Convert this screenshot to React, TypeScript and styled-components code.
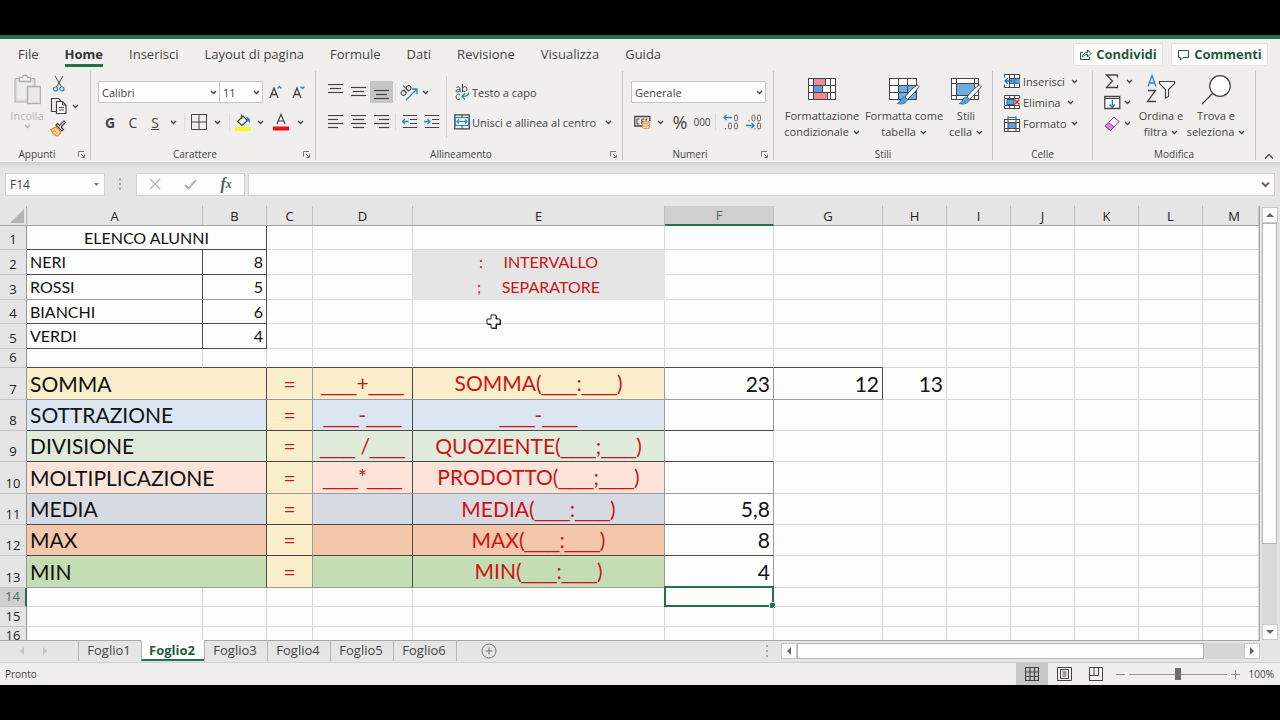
import React from "react";
import styled, { createGlobalStyle, css } from "styled-components";

const UI_FONT = `"Open Sans", "Noto Sans", sans-serif`;
const CELL_FONT = `Lato, "Liberation Sans", sans-serif`;
const GREEN = "#217346";
const INK = "#444";
const BLUE = "#2b88c4";

const GlobalStyle = createGlobalStyle`
  *, *::before, *::after { box-sizing: border-box; }
  html, body { margin: 0; padding: 0; background: #000; }
  button, input, select { font-family: inherit; font-size: inherit; color: inherit; margin: 0; }
`;

/* ---------- shell ---------- */

const Shell = styled.div`
  display: flex;
  flex-direction: column;
  height: 100vh;
  padding: 35px 0;
  background: #000;
  font-family: ${UI_FONT};
  font-size: 12px;
  color: ${INK};
`;

const Window = styled.div`
  flex: 1;
  min-height: 0;
  display: flex;
  flex-direction: column;
  overflow: hidden;
  border-top: 4px solid ${GREEN};
  background: #f0efee;
`;

const PlainButton = styled.button`
  display: flex;
  align-items: center;
  justify-content: center;
  padding: 0;
  border: 0;
  background: transparent;
  white-space: nowrap;
`;

/* ---------- tab strip ---------- */

const TabStrip = styled.nav`
  display: flex;
  align-items: center;
  height: 30px;
  flex: none;
  padding: 0 12px 0 18px;
`;

const TabList = styled.div`
  display: flex;
  gap: 26px;
  flex: 1;
`;

const RibbonTab = styled(PlainButton)<{ $active?: boolean }>`
  height: 26px;
  font-size: 13px;
  border-top: 3px solid transparent;
  border-bottom: 3px solid ${(p) => (p.$active ? GREEN : "transparent")};
  font-weight: ${(p) => (p.$active ? 700 : 400)};
  color: ${(p) => (p.$active ? "#333" : INK)};
`;

const ShareButton = styled(PlainButton)<{ $width: number }>`
  width: ${(p) => p.$width}px;
  height: 23px;
  margin-left: 8px;
  gap: 4px;
  background: #fdfdfd;
  border: 1px solid #e3e2e1;
  border-radius: 2px;
  font-size: 13px;
  font-weight: 700;
  color: #1d5c3c;
`;

/* ---------- ribbon ---------- */

const Ribbon = styled.div`
  display: flex;
  flex: none;
  height: 93px;
  padding: 2px 0;
  font-size: 11px;
`;

const Group = styled.section<{ $width: number }>`
  display: flex;
  flex-direction: column;
  flex: none;
  width: ${(p) => p.$width}px;
  border-right: 1px solid #c4c3c2;
`;

const GroupBody = styled.div<{ $left: number }>`
  display: flex;
  flex: 1;
  align-items: flex-start;
  padding-left: ${(p) => p.$left}px;
`;

const GroupFooter = styled.div`
  display: flex;
  align-items: center;
  height: 12px;
  font-size: 10px;
  line-height: 12px;
  svg { margin: 0 5px 0 4px; }
`;

const GroupName = styled.span`
  flex: 1;
  text-align: center;
`;

const Rows = styled.div`
  display: flex;
  flex-direction: column;
  gap: 8px;
  padding-top: 10px;
`;

const TightRows = styled.div<{ $top?: number }>`
  display: flex;
  flex-direction: column;
  padding-top: ${(p) => p.$top || 0}px;
`;

const Row = styled.div`
  display: flex;
  align-items: center;
  height: 22px;
`;

const TightRow = styled(Row)`
  height: 21px;
`;

const Tool = styled(PlainButton)<{ $width?: number; $on?: boolean }>`
  width: ${(p) => (p.$width ? `${p.$width}px` : "auto")};
  height: 22px;
  flex: none;
  background: ${(p) => (p.$on ? "#c6c6c6" : "transparent")};
`;

const LabelTool = styled(PlainButton)`
  height: 22px;
  gap: 2px;
  padding-left: 3px;
`;

const Divider = styled.span<{ $gap: number }>`
  width: 1px;
  height: 18px;
  margin: 0 ${(p) => p.$gap}px;
  background: #dcdbda;
`;

const TallDivider = styled.span`
  width: 1px;
  height: 62px;
  margin: 5px 4px 0 3px;
  background: #d4d3d2;
`;

const BigTool = styled(PlainButton)<{ $width: number; $muted?: boolean }>`
  flex-direction: column;
  justify-content: flex-start;
  width: ${(p) => p.$width}px;
  padding-top: 3px;
  line-height: 16px;
  color: ${(p) => (p.$muted ? "#b3b2b1" : INK)};
  svg { flex: none; }
`;

const BigToolText = styled.span`
  display: block;
  padding-top: 3px;
  svg {
    margin-left: 1px;
    vertical-align: 1px;
  }
`;

const LetterTool = styled(Tool)`
  font-size: 14px;
`;

const PercentTool = styled(Tool)`
  font-size: 18px;
`;

const ThousandsTool = styled(Tool)`
  font-size: 10px;
`;

const SelectBox = styled.label<{ $width: number }>`
  position: relative;
  display: block;
  width: ${(p) => p.$width}px;
  height: 22px;
  & + & { margin-left: -1px; }
  svg {
    position: absolute;
    right: 3px;
    top: 9px;
    pointer-events: none;
  }
`;

const Select = styled.select`
  appearance: none;
  width: 100%;
  height: 22px;
  padding: 0 3px;
  border: 1px solid #c8c7c6;
  border-radius: 0;
  background: #fefefe;
`;

const RibbonEnd = styled.div`
  flex: 1;
  display: flex;
  align-items: flex-end;
  justify-content: flex-end;
  padding-right: 6px;
`;

/* ---------- formula bar ---------- */

const FormulaBar = styled.div`
  display: flex;
  align-items: center;
  flex: none;
  height: 44px;
  padding: 0 5px;
  background: linear-gradient(#d0cfce, #e5e5e5 6px);
`;

const NameBox = styled.div`
  display: flex;
  align-items: center;
  width: 100px;
  height: 23px;
  padding-right: 5px;
  border: 1px solid #d2d2d2;
  background: #fdfdfd;
`;

const BareInput = styled.input`
  flex: 1;
  min-width: 0;
  height: 21px;
  padding: 0 4px;
  border: 0;
  outline: 0;
  background: transparent;
`;

const GripSlot = styled.span`
  display: flex;
  justify-content: center;
  width: 31px;
`;

const FormulaTools = styled.div`
  display: flex;
  width: 109px;
  height: 23px;
  border: 1px solid #d2d2d2;
  background: #fdfdfd;
  button { flex: 1; }
`;

const FxButton = styled(PlainButton)`
  font-family: "Liberation Serif", serif;
  font-style: italic;
  font-weight: 700;
  font-size: 16px;
  color: #5c5c5c;
  sub {
    font-size: 12px;
    line-height: 12px;
    vertical-align: -2px;
  }
`;

const FormulaField = styled.div`
  flex: 1;
  display: flex;
  align-items: center;
  height: 23px;
  margin-left: 3px;
  padding-right: 4px;
  border: 1px solid #d2d2d2;
  background: #fdfbfc;
`;

/* ---------- grid ---------- */

const SheetArea = styled.div`
  flex: 1;
  min-height: 0;
  display: flex;
  background: #e5e5e5;
`;

const GridClip = styled.div`
  flex: 1;
  min-width: 0;
  overflow: hidden;
  border-right: 1px solid #a6a6a6;
  background: #fdfdfd;
`;

const Grid = styled.table`
  width: 100%;
  min-width: 1240px;
  table-layout: fixed;
  border-collapse: separate;
  border-spacing: 0;
  font-size: 13px;
`;

const ColumnHead = styled.th<{ $selected?: boolean }>`
  height: 20px;
  padding: 0;
  line-height: 18px;
  font-weight: 400;
  color: ${(p) => (p.$selected ? "#43705a" : "#222")};
  background: ${(p) => (p.$selected ? "#cfcfcf" : "#e5e5e5")};
  border-right: 1px solid #c0c0c0;
  border-bottom: ${(p) => (p.$selected ? `2px solid ${GREEN}` : "1px solid #a6a6a6")};
  &:last-child { padding-left: 7px; }
`;

const Corner = styled.td`
  padding: 3px 2px 2px 10px;
  line-height: 0;
  background: #e5e5e5;
  border-right: 1px solid #b4b4b4;
  border-bottom: 1px solid #a6a6a6;
`;

const RowHead = styled.th<{ $selected?: boolean }>`
  padding: 0 0 1px;
  vertical-align: bottom;
  line-height: 17px;
  font-weight: 400;
  color: ${(p) => (p.$selected ? "#43705a" : "#222")};
  background: ${(p) => (p.$selected ? "#cfcfcf" : "#e5e5e5")};
  border-right: ${(p) => (p.$selected ? `2px solid ${GREEN}` : "1px solid #8f9791")};
  border-bottom: 1px solid #c4c4c4;
`;

type Edge = "dark" | "mid" | "none" | undefined;
const edgeColor = (edge: Edge, fill?: string) =>
  edge === "dark" ? "#4a4a4a" : edge === "mid" ? "#9a9a9a" : edge === "none" ? fill || "#fdfdfd" : "#d9d9d9";

const Cell = styled.td<{
  $fill?: string;
  $right?: Edge;
  $bottom?: Edge;
  $align?: string;
  $red?: boolean;
  $large?: boolean;
}>`
  position: relative;
  padding: 0 3px;
  white-space: pre;
  font-family: ${CELL_FONT};
  line-height: 18px;
  color: ${(p) => (p.$red ? "#cc1414" : "#111")};
  text-align: ${(p) => p.$align || "left"};
  font-size: ${(p) => (p.$large ? 21 : 16)}px;
  background: ${(p) => p.$fill || "transparent"};
  border-right: 1px solid ${(p) => edgeColor(p.$right, p.$fill)};
  border-bottom: 1px solid ${(p) => edgeColor(p.$bottom, p.$fill)};
`;

const Underline = styled.span`
  font-family: "Liberation Sans", sans-serif;
`;

const Selection = styled.span`
  position: absolute;
  inset: -2px -1px -1px -1px;
  border: 2px solid ${GREEN};
  &::after {
    content: "";
    position: absolute;
    right: -3px;
    bottom: -3px;
    width: 5px;
    height: 5px;
    background: ${GREEN};
    box-shadow: 0 0 0 1px #fff;
  }
`;

const Pointer = styled.svg`
  position: absolute;
  left: 73px;
  top: 14px;
  z-index: 1;
`;

/* ---------- scroll bars ---------- */

const VScroll = styled.div`
  display: flex;
  flex-direction: column;
  flex: none;
  width: 20px;
  padding: 1px 3px 0 2px;
  background: #e5e5e5;
`;

const VTrack = styled.div`
  flex: 1;
  background: #d9d9d9;
`;

const VThumb = styled.div`
  height: 80%;
  border: 1px solid #b5b5b5;
  background: #fdfdfd;
`;

const Arrow = styled(PlainButton)`
  width: 16px;
  height: 16px;
  flex: none;
  border: 1px solid #c8c8c8;
  background: #fdfdfd;
`;

const HScroll = styled.div`
  display: flex;
  align-items: center;
  flex: none;
  width: 38%;
  height: 21px;
  border-top: 1px solid #a6a6a6;
`;

const HTrack = styled.div`
  flex: 1;
  height: 16px;
  background: #d6d6d6;
`;

const HThumb = styled.div`
  width: 91%;
  height: 16px;
  border: 1px solid #b5b5b5;
  background: #fdfdfd;
`;

/* ---------- sheet tabs and status ---------- */

const SheetBar = styled.div`
  display: flex;
  align-items: flex-start;
  flex: none;
  height: 23px;
  padding-right: 20px;
  border-bottom: 1px solid #cfcfcf;
  background: #e5e5e5;
`;

const SheetNav = styled.div`
  display: flex;
  width: 78px;
  height: 21px;
  padding-left: 10px;
  border-top: 1px solid #a6a6a6;
  button { width: 23px; }
`;

const SheetTab = styled(PlainButton)<{ $active?: boolean }>`
  width: 63px;
  height: 21px;
  padding: 0 2px 2px 0;
  font-size: 13px;
  line-height: 17px;
  border-top: 1px solid #a6a6a6;
  border-left: 1px solid #b5b5b5;
  ${(p) =>
    p.$active &&
    css`
      padding-bottom: 0;
      font-weight: 700;
      color: #1d5c3c;
      background: #fff;
      border-top-color: #fff;
      border-bottom: 2px solid ${GREEN};
    `}
`;

const SheetFill = styled.div`
  flex: 1;
  display: flex;
  align-items: center;
  justify-content: space-between;
  height: 21px;
  padding: 0 12px 0 24px;
  border-top: 1px solid #a6a6a6;
  border-left: 1px solid #b5b5b5;
`;

const StatusBar = styled.footer`
  display: flex;
  align-items: center;
  flex: none;
  height: 22px;
  padding: 0 6px 0 5px;
  font-size: 10px;
`;

const StatusText = styled.span`
  flex: 1;
  padding-bottom: 1px;
`;

const ViewButton = styled(PlainButton)<{ $on?: boolean }>`
  width: 32px;
  height: 22px;
  background: ${(p) => (p.$on ? "#c6c6c6" : "transparent")};
`;

const ZoomControls = styled.div`
  display: flex;
  align-items: center;
  margin-left: 4px;
`;

const ZoomSlider = styled.input`
  appearance: none;
  width: 98px;
  height: 12px;
  margin: 0 4px;
  background: linear-gradient(#9a9a9a, #9a9a9a) center / 100% 1px no-repeat;
  &::-webkit-slider-thumb {
    appearance: none;
    width: 6px;
    height: 12px;
    background: #6d6d6d;
  }
`;

const ZoomValue = styled.span`
  width: 34px;
  padding-bottom: 1px;
  text-align: right;
`;

/* ---------- icons ---------- */

type IconProps = { w: number; h: number; children: React.ReactNode; stroke?: string; top?: number };
const Icon = ({ w, h, children, stroke = INK, top = 0 }: IconProps) => (
  <svg width={w} height={h} viewBox={`0 ${-top} ${w} ${h}`} fill="none" stroke={stroke} strokeWidth="1" aria-hidden="true">
    {children}
  </svg>
);

const Chevron = ({ color = INK }: { color?: string }) => (
  <Icon w={7} h={5} stroke={color}>
    <path d="M1 1l2.500 2.500L6 1" strokeWidth="1.300" />
  </Icon>
);

const Launcher = () => (
  <Icon w={7} h={7} stroke="#777">
    <path d="M.5 5.500V.5H6M3 3l3 3M6.500 3.500v3h-3" />
  </Icon>
);

const PasteIcon = () => (
  <Icon w={28} h={31}>
    <g stroke="#b0afae">
      <path d="M2 4.500h20v23.500H2z" fill="#dddcdb" />
      <path d="M4.500 7.500h15v18h-15z" fill="#ececeb" stroke="none" />
      <path d="M6.500 7.500v-4h3c0-3 5-3 5 0h3v4z" fill="#f0efee" strokeWidth="1.300" />
      <path d="M14.500 12.500h13v17h-13z" fill="#e9e9e9" strokeWidth="1.500" />
    </g>
  </Icon>
);

const CutIcon = () => (
  <Icon w={12} h={16}>
    <path d="M2 0l6.500 11M10 0L3.500 11" />
    <circle cx="2.500" cy="13" r="2" stroke={BLUE} strokeWidth="1.200" />
    <circle cx="9" cy="13" r="2" stroke={BLUE} strokeWidth="1.200" />
  </Icon>
);

const CopyIcon = () => (
  <Icon w={17} h={16}>
    <path d="M6 13.500H1.500V.5h7L11 3" strokeWidth="1.200" />
    <path d="M6.500 3.500h6l3.500 3.500v8.500H6.500z" fill="#fdfdfd" strokeWidth="1.200" />
    <path d="M12.500 3.500V7H16M9 9.500h5M9 12h5" />
  </Icon>
);

const PainterIcon = () => (
  <Icon w={17} h={17}>
    <path d="M.8 9.500L6 7l5 5-3 4c-3 .3-5.500-3-7.200-6.500z" fill="#f9d3a6" stroke="#e08a2c" strokeWidth="1.200" />
    <path d="M3 11l3 .5M5.500 14l2-1.500" stroke="#e08a2c" />
    <path d="M6 5l6 6 1.500-1.500L11 7l4.500-4.500L14 1 9.500 5.500 7.500 3.500z" fill="#fdfdfd" strokeWidth="1.200" />
  </Icon>
);

const FontSizeIcon = ({ down }: { down?: boolean }) => (
  <Icon w={14} h={14}>
    <path d="M1 13L5 3l4 10M2.500 9.500h5" strokeWidth="1.300" />
    <path d={down ? "M8.500 1.500l2 2 2-2" : "M8.500 3.500l2-2 2 2"} stroke={BLUE} strokeWidth="1.300" />
  </Icon>
);

const BordersIcon = () => (
  <Icon w={16} h={16}>
    <path d="M.5.5h15v15H.5zM8 .5v15M.5 8h15" />
  </Icon>
);

const FillIcon = () => (
  <Icon w={17} h={17}>
    <path d="M2.500 7.500L8 2l4.500 4.500L7 11.500zM6.500.5v4.500" strokeWidth="1.200" />
    <path d="M11.500 3.500c3 0 3.500 2.500 3 5-1.500-1.500-1.500-3-3-5z" fill={BLUE} stroke={BLUE} />
    <path d="M0 13h16v4H0z" fill="#f8f820" stroke="none" />
  </Icon>
);

const FontColorIcon = () => (
  <Icon w={16} h={18}>
    <path d="M4 11L8 1.300l4 9.700M5.200 8h5.600" strokeWidth="1.200" />
    <path d="M0 13.500h16v4H0z" fill="#ee1111" stroke="none" />
  </Icon>
);

const LinesIcon = ({ lines, h = 14 }: { lines: [number, number, number][]; h?: number }) => (
  <Icon w={15} h={h}>
    {lines.map(([x1, x2, y]) => (
      <path key={y} d={`M${x1} ${y}H${x2}`} strokeWidth="1.200" />
    ))}
  </Icon>
);

const IndentIcon = ({ right }: { right?: boolean }) => (
  <Icon w={15} h={14}>
    <path d="M1 .5h14M8 4.500h7M8 8.500h7M1 12.500h14" strokeWidth="1.200" />
    <path d={right ? "M0 6.500h6M3.500 4L6 6.500 3.500 9" : "M6.500 6.500h-6M3 4L.5 6.500 3 9"} stroke={BLUE} strokeWidth="1.300" />
  </Icon>
);

const OrientationIcon = () => (
  <Icon w={18} h={17}>
    <g transform="rotate(-45 6 8)">
      <circle cx="3.500" cy="7" r="2.300" />
      <path d="M5.800 4.500V9.500M8.500 1.500v8" />
      <circle cx="10.800" cy="7" r="2.300" />
    </g>
    <path d="M6 16L16.500 5.500M12 5h5v5" stroke={BLUE} strokeWidth="1.300" />
  </Icon>
);

const WrapIcon = () => (
  <Icon w={16} h={16}>
    <path d="M2.500 3.500c2-1.200 3.500-.5 3.500 1V8M6 5.500c-2-.3-4 .2-4 1.500s3 1.500 4-.5" />
    <path d="M8.500 0v8M8.500 5c0-3 4.500-3 4.500 0s-4.500 3-4.500 1" />
    <path d="M6 11c-1.500-1.200-4-.5-4 2s2.500 3 4 1.800" />
    <path d="M14.500 8.500c0 3-2 4-6 4M11 9.500l-3 3 3 3" stroke={BLUE} strokeWidth="1.300" />
  </Icon>
);

const MergeIcon = () => (
  <Icon w={16} h={16}>
    <path d="M.8.8h14.400v14H.8z" strokeWidth="1.300" />
    <path d="M1.300 3.500h13.400v8H1.300z" fill="#e4f2fb" stroke={BLUE} strokeWidth="1.200" />
    <path d="M8 .5v3M8 11.500v3" />
    <path d="M3 7.500h10M5 5.500l-2 2 2 2M11 5.500l2 2-2 2" stroke={BLUE} strokeWidth="1.200" />
  </Icon>
);

const CurrencyIcon = () => (
  <Icon w={17} h={15}>
    <path d="M8 11H.8V1.500h15V6" strokeWidth="1.300" />
    <path d="M5.500 4H3v5h2.500M10.500 4H7.800v5H8M7.800 6.500h2M13.500 4H12v2" />
    <path d="M8.500 7.500c0-1.500 7-1.500 7 0v5c0 1.500-7 1.500-7 0z" fill="#fbe3c4" stroke="#e8912d" />
    <path d="M8.500 7.500c0 1.500 7 1.500 7 0M8.500 10c0 1.500 7 1.500 7 0" stroke="#e8912d" />
  </Icon>
);

const Zero = ({ x, y }: { x: number; y: number }) => <rect x={x} y={y} width="3" height="6" rx="1.500" />;

const DecimalIcon = ({ fewer }: { fewer?: boolean }) => (
  <Icon w={16} h={16} stroke="#666">
    {fewer ? (
      <>
        <Zero x={6} y={1} />
        <Zero x={11.5} y={1} />
        <Zero x={11.5} y={9} />
        <path d="M3 6v1.500M9 14v1.500" />
        <path d="M0 11.500h8M5.500 9L8 11.500 5.500 14" stroke={BLUE} strokeWidth="1.300" />
      </>
    ) : (
      <>
        <Zero x={11.5} y={1} />
        <Zero x={5.5} y={9} />
        <Zero x={11.5} y={9} />
        <path d="M2.500 14v1.500" />
        <path d="M9 3.500H1M3.500 1L1 3.500 3.500 6" stroke={BLUE} strokeWidth="1.300" />
      </>
    )}
  </Icon>
);

const ConditionalIcon = () => (
  <Icon w={30} h={31} top={2}>
    <path d="M1.500 2.500h27v21h-27z" fill="#fdfdfd" />
    <path d="M6.500 2.500h12v7h-12zM6.500 16.500h14v7h-14z" fill="#f28b90" stroke="none" />
    <path d="M6.500 10h9v6h-9z" fill="#5b9fdb" stroke="none" />
    <path d="M1.500 2.500h27v21h-27zM1.500 9.500h27M1.500 16.500h27M6.500 2.500v21M18.500 2.500v7M15.500 9.500v7M20.500 16.500v7M23.500 2.500v21" />
  </Icon>
);

const BrushShape = () => (
  <>
    <path d="M29.500 9c-3 1-9.500 8-12.500 12l2.500 2.500C23 20 30 13 31 10.500z" fill="#fdfdfd" />
    <path d="M9 27.500c3-.5 3.500-3.500 5-5.500 1.500-1.500 4.500-1 5 1.500.5 3-4 5.500-10 4z" fill="#5b9fdb" stroke="#3479b8" />
  </>
);

const TableFormatIcon = () => (
  <Icon w={32} h={31} top={2}>
    <path d="M1.500 2.500h27v21h-27z" fill="#fdfdfd" />
    <path d="M10.500 9.500h18v14h-18z" fill="#6cade4" stroke="none" />
    <path d="M1.500 2.500h27v21h-27zM1.500 9.500h27M1.500 16.500h27M10.500 2.500v21M19.500 2.500v21" />
    <BrushShape />
  </Icon>
);

const CellStyleIcon = () => (
  <Icon w={32} h={31} top={2}>
    <path d="M1.500 2.500h27v21h-27z" fill="#fdfdfd" />
    <path d="M6.500 7.500h18v12h-18z" fill="#6cade4" stroke="none" />
    <path d="M1.500 2.500h27v21h-27zM1.500 7.500h27M1.500 19.500h27M6.500 2.500v21M24.500 2.500v21" />
    <BrushShape />
  </Icon>
);

const InsertCellsIcon = () => (
  <Icon w={17} h={15}>
    <path d="M.5.5h15v13H.5z" fill="#fdfdfd" />
    <path d="M.5 4.500h15M.5 9.500h15M5.500.5v13M10.500.5v13" />
    <path d="M6 5h10v4.500H6z" fill="#5b9fdb" stroke="none" />
    <path d="M0 3.500h5v7H0z" fill="#f0efee" stroke="none" />
    <path d="M10.500 4.500v5M8 7H1M4 4L1 7l3 3" stroke="#1f77bd" strokeWidth="1.300" />
  </Icon>
);

const DeleteCellsIcon = () => (
  <Icon w={17} h={15}>
    <path d="M.5.5h15v3H.5zM.5 10.500h15v3H.5zM5.500.5v3M10.500.5v3M5.500 10.500v3M10.500 10.500v3" fill="#fdfdfd" />
    <path d="M.5 3.500v7M3 4.500h7v5H3z" fill="#5b9fdb" stroke="#1f5f9e" />
    <path d="M10.500 4.500l5 5M15.500 4.500l-5 5" stroke="#e02b2b" strokeWidth="1.500" />
  </Icon>
);

const FormatCellsIcon = () => (
  <Icon w={17} h={16}>
    <path d="M.5 3.500h15v12H.5z" fill="#fdfdfd" />
    <path d="M4 6.500h8v6H4z" fill="#5b9fdb" stroke="none" />
    <path d="M.5 3.500h15v12H.5zM.5 6.500h15M.5 12.500h15M4 3.500v12M12 3.500v12" />
    <path d="M4 1.500h8M4 0v3M12 0v3" stroke="#1f77bd" />
  </Icon>
);

const SumIcon = () => (
  <Icon w={14} h={15}>
    <path d="M12.500 3.500V1H1.500l6 6-6 6.500h11V11" strokeWidth="1.300" />
  </Icon>
);

const FillDownIcon = () => (
  <Icon w={17} h={15}>
    <path d="M.8 1.500h15v12H.8z" fill="#fdfdfd" strokeWidth="1.300" />
    <path d="M1 3.500h15" />
    <path d="M8.300 5v7M5.500 9.500l2.800 2.800 2.800-2.800" stroke="#1f77bd" strokeWidth="1.300" />
  </Icon>
);

const EraserIcon = () => (
  <Icon w={17} h={16} stroke="#96399e">
    <path d="M1 10L10 1l5 4.500L6.500 14.500z" fill="#fdfdfd" />
    <path d="M1 10l3.500-3.500L10 11l-3.500 3.500z" fill="#d58bdc" />
  </Icon>
);

const SortIcon = () => (
  <Icon w={30} h={31}>
    <path d="M2 12.500L6 1.500l4 11M3.500 9h5" stroke={BLUE} strokeWidth="1.300" />
    <path d="M2 16.500h7.500l-8 11h8.500" strokeWidth="1.300" />
    <path d="M13.500 7.500h15v2l-6 6v7l-3 1.500v-8.500l-6-6z" fill="#fdfdfd" strokeWidth="1.200" />
  </Icon>
);

const FindIcon = () => (
  <Icon w={30} h={31} top={1}>
    <circle cx="19" cy="11" r="10.300" fill="#fdfdfd" strokeWidth="1.200" />
    <path d="M11.500 18.500L1 29" strokeWidth="1.300" />
  </Icon>
);

const ShareIcon = () => (
  <Icon w={13} h={13} stroke="#1d5c3c">
    <path d="M4 4.500H1.500v7h9V9M3.500 9c.5-3 2-4.500 5-4.500V2L12 5.500 8.500 9V6.500C6 6.500 5 7 3.500 9z" />
  </Icon>
);

const CommentIcon = () => (
  <Icon w={13} h={13} stroke="#1d5c3c">
    <path d="M1.500 2.500h10v7H6l-2.500 2.500V9.500h-2z" />
  </Icon>
);

const Triangle = ({ d, color = "#666" }: { d: string; color?: string }) => (
  <Icon w={8} h={8} stroke="none">
    <path d={d} fill={color} />
  </Icon>
);
const UP = "M0 6l4-4 4 4z";
const DOWN = "M0 2l4 4 4-4z";
const LEFT = "M6 0v8L2 4z";
const RIGHT = "M2 0v8l4-4z";

const Grip = () => (
  <Icon w={3} h={12} stroke="none">
    <path d="M0 0h2v2H0zM0 5h2v2H0zM0 10h2v2H0z" fill="#a8a8a8" />
  </Icon>
);

/* ---------- data ---------- */

const TABS = ["File", "Home", "Inserisci", "Layout di pagina", "Formule", "Dati", "Revisione", "Visualizza", "Guida"];
const SHEETS = ["Foglio1", "Foglio2", "Foglio3", "Foglio4", "Foglio5", "Foglio6"];

const COLUMNS: [string, number | undefined][] = [
  ["A", 176], ["B", 64], ["C", 46], ["D", 100], ["E", 252], ["F", 109], ["G", 109],
  ["H", 64], ["I", 64], ["J", 64], ["K", 64], ["L", 64], ["M", undefined],
];

const YELLOW = "#fbeecb";
const OPERATIONS = [
  { row: 7, h: 32, name: "SOMMA", fill: YELLOW, sign: "___+___", formula: "SOMMA(___:___)", result: "23" },
  { row: 8, h: 31, name: "SOTTRAZIONE", fill: "#dbe6f2", sign: "___-___", formula: "___-___", result: "" },
  { row: 9, h: 31, name: "DIVISIONE", fill: "#e0ebdb", sign: "___ /___", formula: "QUOZIENTE(___;___)", result: "" },
  { row: 10, h: 32, name: "MOLTIPLICAZIONE", fill: "#fce3d9", sign: "___*___", formula: "PRODOTTO(___;___)", result: "" },
  { row: 11, h: 31, name: "MEDIA", fill: "#d6dae3", sign: "", formula: "MEDIA(___:___)", result: "5,8" },
  { row: 12, h: 31, name: "MAX", fill: "#f4c7aa", sign: "", formula: "MAX(___:___)", result: "8" },
  { row: 13, h: 32, name: "MIN", fill: "#c5ddb3", sign: "", formula: "MIN(___:___)", result: "4" },
];

const PUPILS = [
  { row: 2, h: 25, name: "NERI", mark: "8", note: ":     INTERVALLO" },
  { row: 3, h: 25, name: "ROSSI", mark: "5", note: ";     SEPARATORE" },
  { row: 4, h: 24, name: "BIANCHI", mark: "6", note: "" },
  { row: 5, h: 25, name: "VERDI", mark: "4", note: "" },
];

const Blanks = ({ count }: { count: number }) => (
  <>
    {Array.from({ length: count }, (_, i) => (
      <Cell key={i} />
    ))}
  </>
);

/* Runs of underscores are set in a face whose underscores join into one line. */
const Formula = ({ text }: { text: string }) => (
  <>
    {text.split(/(_+)/).map((part, i) => (part.startsWith("_") ? <Underline key={i}>{part}</Underline> : part))}
  </>
);

const CellPointer = () => (
  <Pointer width="17" height="17" viewBox="0 0 17 17" aria-hidden="true">
    <path d="M6 2h5v4h4v5h-4v4H6v-4H2V6h4z" fill="#222" />
    <path d="M5 1h5v4h4v5h-4v4H5v-4H1V5h4z" fill="#fff" stroke="#222" />
  </Pointer>
);

const SheetGrid = () => (
  <Grid>
    <colgroup>
      <col width={27} />
      {COLUMNS.map(([name, width]) => (
        <col key={name} width={width} />
      ))}
    </colgroup>
    <thead>
      <tr>
        <Corner>
          <Icon w={14} h={14} stroke="none">
            <path d="M14 0v14H0z" fill="#b4b4b4" />
          </Icon>
        </Corner>
        {COLUMNS.map(([name]) => (
          <ColumnHead key={name} scope="col" $selected={name === "F"}>{name}</ColumnHead>
        ))}
      </tr>
    </thead>
    <tbody>
      <tr style={{ height: 24 }}>
        <RowHead scope="row">1</RowHead>
        <Cell colSpan={2} $align="center" $right="dark" $bottom="dark">ELENCO ALUNNI</Cell>
        <Blanks count={11} />
      </tr>
      {PUPILS.map((p) => (
        <tr key={p.row} style={{ height: p.h }}>
          <RowHead scope="row">{p.row}</RowHead>
          <Cell $right="dark" $bottom={p.row === 3 ? "mid" : "dark"}>{p.name}</Cell>
          <Cell $right="dark" $bottom={p.row === 3 ? "mid" : "dark"} $align="right">{p.mark}</Cell>
          <Blanks count={2} />
          {p.note ? (
            <Cell $fill="#e5e5e5" $right="none" $bottom="none" $align="center" $red>{p.note}</Cell>
          ) : (
            <Cell>{p.row === 4 && <CellPointer />}</Cell>
          )}
          <Blanks count={8} />
        </tr>
      ))}
      <tr style={{ height: 19 }}>
        <RowHead scope="row">6</RowHead>
        {COLUMNS.map(([name]) => (
          <Cell key={name} $bottom={name < "H" ? "dark" : undefined} />
        ))}
      </tr>
      {OPERATIONS.map((op) => {
        const line: Edge = op.row === 7 || op.row === 10 || op.row === 13 ? "mid" : "dark";
        return (
          <tr key={op.row} style={{ height: op.h }}>
            <RowHead scope="row">{op.row}</RowHead>
            <Cell colSpan={2} $large $fill={op.fill} $right="dark" $bottom={line}>{op.name}</Cell>
            <Cell $large $fill={YELLOW} $right="mid" $bottom={line} $align="center" $red>=</Cell>
            <Cell $large $fill={op.fill} $right="dark" $bottom={line} $align="center" $red><Formula text={op.sign} /></Cell>
            <Cell $large $fill={op.fill} $right="mid" $bottom={line} $align="center" $red><Formula text={op.formula} /></Cell>
            <Cell $large $right={op.row === 9 ? undefined : "mid"} $bottom={op.row === 8 || op.row === 9 ? "dark" : line} $align="right">{op.result}</Cell>
            <Cell $large $right={op.row === 7 ? "dark" : undefined} $bottom={op.row === 7 ? "mid" : undefined} $align="right">
              {op.row === 7 ? "12" : ""}
            </Cell>
            <Cell $large $align="right">{op.row === 7 ? "13" : ""}</Cell>
            <Blanks count={5} />
          </tr>
        );
      })}
      {[14, 15, 16].map((row) => (
        <tr key={row} style={{ height: row === 15 ? 20 : 19 }}>
          <RowHead scope="row" $selected={row === 14}>{row}</RowHead>
          <Blanks count={5} />
          <Cell>{row === 14 && <Selection />}</Cell>
          <Blanks count={7} />
        </tr>
      ))}
    </tbody>
  </Grid>
);

/* ---------- ribbon groups ---------- */

const Footer = ({ name, launcher = true }: { name: string; launcher?: boolean }) => (
  <GroupFooter>
    <GroupName>{name}</GroupName>
    {launcher && <Launcher />}
  </GroupFooter>
);

const Drop = ({ width, label }: { width: number; label: string }) => (
  <Tool $width={width} aria-label={label}><Chevron /></Tool>
);

const ClipboardGroup = () => (
  <Group $width={91} aria-label="Appunti">
    <GroupBody $left={4}>
      <BigTool $width={46} $muted>
        <PasteIcon />
        <BigToolText>Incolla</BigToolText>
        <Chevron color="#b3b2b1" />
      </BigTool>
      <TightRows $top={2}>
        <Row><Tool $width={17} aria-label="Taglia"><CutIcon /></Tool></Row>
        <Row>
          <Tool $width={17} aria-label="Copia"><CopyIcon /></Tool>
          <Drop width={16} label="Opzioni copia" />
        </Row>
        <Row><Tool $width={17} aria-label="Copia formato"><PainterIcon /></Tool></Row>
      </TightRows>
    </GroupBody>
    <Footer name="Appunti" />
  </Group>
);

const FontGroup = () => (
  <Group $width={225} aria-label="Carattere">
    <GroupBody $left={7}>
      <Rows>
        <Row>
          <SelectBox $width={122}>
            <Select aria-label="Tipo di carattere"><option>Calibri</option></Select>
            <Chevron />
          </SelectBox>
          <SelectBox $width={44}>
            <Select aria-label="Dimensione carattere"><option>11</option></Select>
            <Chevron />
          </SelectBox>
          <Tool $width={26} aria-label="Aumenta dimensione"><FontSizeIcon /></Tool>
          <Tool $width={20} aria-label="Riduci dimensione"><FontSizeIcon down /></Tool>
        </Row>
        <Row>
          <LetterTool $width={24}><b>G</b></LetterTool>
          <LetterTool $width={22}>C</LetterTool>
          <LetterTool $width={22}><u>S</u></LetterTool>
          <Drop width={14} label="Opzioni sottolineato" />
          <Divider $gap={4} />
          <Tool $width={20} aria-label="Bordi"><BordersIcon /></Tool>
          <Drop width={16} label="Opzioni bordi" />
          <Divider $gap={4} />
          <Tool $width={18} aria-label="Colore riempimento"><FillIcon /></Tool>
          <Drop width={16} label="Opzioni riempimento" />
          <Tool $width={26} aria-label="Colore carattere"><FontColorIcon /></Tool>
          <Drop width={12} label="Opzioni colore" />
        </Row>
      </Rows>
    </GroupBody>
    <Footer name="Carattere" />
  </Group>
);

const AlignGroup = () => (
  <Group $width={307} aria-label="Allineamento">
    <GroupBody $left={8}>
      <Rows>
        <Row>
          <Tool $width={23} aria-label="Allinea in alto"><LinesIcon lines={[[0, 15, 0.5], [2, 13, 4.5], [0, 15, 8.5]]} h={16} /></Tool>
          <Tool $width={23} aria-label="Allinea al centro"><LinesIcon lines={[[0, 15, 2.5], [2, 13, 6.5], [0, 15, 10.5]]} /></Tool>
          <Tool $width={23} $on aria-label="Allinea in basso"><LinesIcon lines={[[0, 15, 6.5], [2, 13, 10.5], [0, 15, 14.5]]} h={16} /></Tool>
          <Divider $gap={2} />
          <Tool $width={22} aria-label="Orientamento"><OrientationIcon /></Tool>
          <Drop width={10} label="Opzioni orientamento" />
        </Row>
        <Row>
          <Tool $width={23} aria-label="Allinea a sinistra"><LinesIcon lines={[[0, 15, 0.5], [0, 10, 4.5], [0, 15, 8.5], [0, 10, 12.5]]} /></Tool>
          <Tool $width={23} aria-label="Centra"><LinesIcon lines={[[0, 15, 0.5], [2, 13, 4.5], [0, 15, 8.5], [2, 13, 12.5]]} /></Tool>
          <Tool $width={23} aria-label="Allinea a destra"><LinesIcon lines={[[0, 15, 0.5], [5, 15, 4.5], [0, 15, 8.5], [5, 15, 12.5]]} /></Tool>
          <Divider $gap={2} />
          <Tool $width={22} aria-label="Riduci rientro"><IndentIcon /></Tool>
          <Tool $width={23} aria-label="Aumenta rientro"><IndentIcon right /></Tool>
        </Row>
      </Rows>
      <TallDivider />
      <Rows>
        <Row><LabelTool><WrapIcon />Testo a capo</LabelTool></Row>
        <Row>
          <LabelTool><MergeIcon />Unisci e allinea al centro</LabelTool>
          <Drop width={24} label="Opzioni unione" />
        </Row>
      </Rows>
    </GroupBody>
    <Footer name="Allineamento" />
  </Group>
);

const NumberGroup = () => (
  <Group $width={151} aria-label="Numeri">
    <GroupBody $left={8}>
      <Rows>
        <Row>
          <SelectBox $width={135}>
            <Select aria-label="Formato numero"><option>Generale</option></Select>
            <Chevron />
          </SelectBox>
        </Row>
        <Row>
          <Tool $width={22} aria-label="Valuta"><CurrencyIcon /></Tool>
          <Drop width={14} label="Opzioni valuta" />
          <PercentTool $width={26}>%</PercentTool>
          <ThousandsTool $width={18}>000</ThousandsTool>
          <Divider $gap={4} />
          <Tool $width={22} aria-label="Aumenta decimali"><DecimalIcon /></Tool>
          <Tool $width={24} aria-label="Diminuisci decimali"><DecimalIcon fewer /></Tool>
        </Row>
      </Rows>
    </GroupBody>
    <Footer name="Numeri" />
  </Group>
);

const StylesGroup = () => (
  <Group $width={219} aria-label="Stili">
    <GroupBody $left={7}>
      <BigTool $width={82}>
        <ConditionalIcon />
        <BigToolText>Formattazione<br />condizionale <Chevron /></BigToolText>
      </BigTool>
      <BigTool $width={82}>
        <TableFormatIcon />
        <BigToolText>Formatta come<br />tabella <Chevron /></BigToolText>
      </BigTool>
      <BigTool $width={42}>
        <CellStyleIcon />
        <BigToolText>Stili<br />cella <Chevron /></BigToolText>
      </BigTool>
    </GroupBody>
    <Footer name="Stili" launcher={false} />
  </Group>
);

const CellsGroup = () => (
  <Group $width={100} aria-label="Celle">
    <GroupBody $left={8}>
      <TightRows>
        <TightRow>
          <LabelTool><InsertCellsIcon />Inserisci</LabelTool>
          <Drop width={20} label="Opzioni inserisci" />
        </TightRow>
        <TightRow>
          <LabelTool><DeleteCellsIcon />Elimina</LabelTool>
          <Drop width={20} label="Opzioni elimina" />
        </TightRow>
        <TightRow>
          <LabelTool><FormatCellsIcon />Formato</LabelTool>
          <Drop width={16} label="Opzioni formato" />
        </TightRow>
      </TightRows>
    </GroupBody>
    <Footer name="Celle" launcher={false} />
  </Group>
);

const EditGroup = () => (
  <Group $width={163} aria-label="Modifica">
    <GroupBody $left={10}>
      <TightRows>
        <TightRow>
          <Tool $width={18} aria-label="Somma automatica"><SumIcon /></Tool>
          <Drop width={16} label="Opzioni somma" />
        </TightRow>
        <TightRow>
          <Tool $width={18} aria-label="Riempimento"><FillDownIcon /></Tool>
          <Drop width={12} label="Opzioni riempimento serie" />
        </TightRow>
        <TightRow>
          <Tool $width={18} aria-label="Cancella"><EraserIcon /></Tool>
          <Drop width={12} label="Opzioni cancella" />
        </TightRow>
      </TightRows>
      <BigTool $width={48}>
        <SortIcon />
        <BigToolText>Ordina e<br />filtra <Chevron /></BigToolText>
      </BigTool>
      <BigTool $width={62}>
        <FindIcon />
        <BigToolText>Trova e<br />seleziona <Chevron /></BigToolText>
      </BigTool>
    </GroupBody>
    <Footer name="Modifica" launcher={false} />
  </Group>
);

export default function App() {
  return (
    <Shell>
      <GlobalStyle />
      <Window>
        <TabStrip>
          <TabList>
            {TABS.map((tab) => (
              <RibbonTab key={tab} $active={tab === "Home"}>{tab}</RibbonTab>
            ))}
          </TabList>
          <ShareButton $width={90}><ShareIcon />Condividi</ShareButton>
          <ShareButton $width={97}><CommentIcon />Commenti</ShareButton>
        </TabStrip>

        <Ribbon>
          <ClipboardGroup />
          <FontGroup />
          <AlignGroup />
          <NumberGroup />
          <StylesGroup />
          <CellsGroup />
          <EditGroup />
          <RibbonEnd>
            <PlainButton aria-label="Comprimi barra multifunzione">
              <Icon w={10} h={7}><path d="M1 5.500l4-4 4 4" strokeWidth="1.300" /></Icon>
            </PlainButton>
          </RibbonEnd>
        </Ribbon>

        <FormulaBar>
          <NameBox>
            <BareInput aria-label="Casella nome" defaultValue="F14" />
            <Icon w={5} h={3} stroke="none"><path d="M0 0h5L2.500 3z" fill="#777" /></Icon>
          </NameBox>
          <GripSlot><Grip /></GripSlot>
          <FormulaTools>
            <PlainButton aria-label="Annulla">
              <Icon w={12} h={12} stroke="#b5b5b5"><path d="M1 1l10 10M11 1L1 11" strokeWidth="1.400" /></Icon>
            </PlainButton>
            <PlainButton aria-label="Invio">
              <Icon w={13} h={11} stroke="#b5b5b5"><path d="M1 6l3.500 3.500L12 1" strokeWidth="2" /></Icon>
            </PlainButton>
            <FxButton>f<sub>x</sub></FxButton>
          </FormulaTools>
          <FormulaField>
            <BareInput aria-label="Barra della formula" />
            <Icon w={9} h={7} stroke="#666"><path d="M1 1.500l3.500 3.500L8 1.500" strokeWidth="2" /></Icon>
          </FormulaField>
        </FormulaBar>

        <SheetArea>
          <GridClip><SheetGrid /></GridClip>
          <VScroll>
            <Arrow aria-label="Scorri su"><Triangle d={UP} /></Arrow>
            <VTrack><VThumb /></VTrack>
            <Arrow aria-label="Scorri giù"><Triangle d={DOWN} /></Arrow>
          </VScroll>
        </SheetArea>

        <SheetBar>
          <SheetNav>
            <PlainButton aria-label="Foglio precedente"><Triangle d={LEFT} color="#c4c4c4" /></PlainButton>
            <PlainButton aria-label="Foglio successivo"><Triangle d={RIGHT} color="#c4c4c4" /></PlainButton>
          </SheetNav>
          {SHEETS.map((name) => (
            <SheetTab key={name} $active={name === "Foglio2"}>{name}</SheetTab>
          ))}
          <SheetFill>
            <PlainButton aria-label="Nuovo foglio">
              <Icon w={16} h={16} stroke="#777">
                <circle cx="8" cy="8" r="7" />
                <path d="M8 4.500v7M4.500 8h7" />
              </Icon>
            </PlainButton>
            <Grip />
          </SheetFill>
          <HScroll>
            <Arrow aria-label="Scorri a sinistra"><Triangle d={LEFT} /></Arrow>
            <HTrack><HThumb /></HTrack>
            <Arrow aria-label="Scorri a destra"><Triangle d={RIGHT} /></Arrow>
          </HScroll>
        </SheetBar>

        <StatusBar>
          <StatusText>Pronto</StatusText>
          <ViewButton $on aria-label="Normale">
            <Icon w={14} h={14}><path d="M.5.5h13v13H.5zM.5 5h13M.5 9.500h13M5 .5v13M9.500.5v13" strokeWidth="1.200" /></Icon>
          </ViewButton>
          <ViewButton aria-label="Layout di pagina">
            <Icon w={15} h={14}><path d="M.5.5h14v13H.5zM3.500 2.500h8v9h-8zM5.500 5h4M5.500 7h4M5.500 9h4" /></Icon>
          </ViewButton>
          <ViewButton aria-label="Anteprima interruzioni">
            <Icon w={14} h={14}><path d="M.5.5h13v13H.5zM.5 8.500h9v-8M5 .5v8" /></Icon>
          </ViewButton>
          <ZoomControls>
            <PlainButton aria-label="Zoom indietro">
              <Icon w={9} h={9} stroke="#888"><path d="M0 4.500h9" /></Icon>
            </PlainButton>
            <ZoomSlider type="range" min="0" max="100" defaultValue="50" aria-label="Zoom" />
            <PlainButton aria-label="Zoom avanti">
              <Icon w={9} h={9} stroke="#888"><path d="M0 4.500h9M4.500 0v9" /></Icon>
            </PlainButton>
            <ZoomValue>100%</ZoomValue>
          </ZoomControls>
        </StatusBar>
      </Window>
    </Shell>
  );
}
